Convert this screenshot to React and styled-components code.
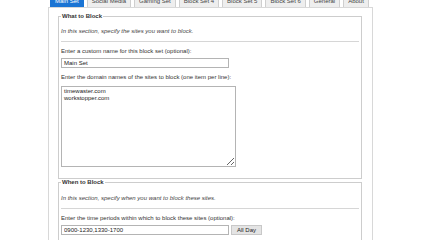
import styled, { createGlobalStyle } from "styled-components"

var tabs = ["Main Set", "Social Media", "Gaming Set", "Block Set 4", "Block Set 5", "Block Set 6", "General", "About"]

var App = () => (
  <Page>
    <Global />
    <TabBar>
      {tabs.map((t, i) => <Tab key={t} active={i === 0}>{t}</Tab>)}
    </TabBar>
    <Panel>
      <Fieldset>
        <Legend>What to Block</Legend>
        <Intro>In this section, specify the sites you want to block.</Intro>
        <Rule />
        <Label>Enter a custom name for this block set (optional):</Label>
        <TextInput defaultValue="Main Set" />
        <Label>Enter the domain names of the sites to block (one item per line):</Label>
        <Sites defaultValue={"timewaster.com\nworkstopper.com"} />
      </Fieldset>
      <Fieldset>
        <Legend>When to Block</Legend>
        <Intro wide>In this section, specify when you want to block these sites.</Intro>
        <Rule />
        <Label>Enter the time periods within which to block these sites (optional):</Label>
        <Row>
          <TextInput defaultValue="0900-1230,1330-1700" />
          <Button>All Day</Button>
        </Row>
      </Fieldset>
    </Panel>
  </Page>
)

var Global = createGlobalStyle`
html, body { margin: 0; padding: 0; background: #fff; overflow: hidden; }
body { font-family: "Liberation Sans", Arial, sans-serif; color: #333; }
`

var Page = styled.div`
display: flow-root;
width: 427px;
height: 240px;
`

var TabBar = styled.div`
display: flex;
gap: 3px;
margin: -5px 0 0 50px;
`

var Tab = styled.div`
box-sizing: border-box;
height: 12px;
padding: 2px 4px 0;
font-size: 6px;
line-height: 7px;
white-space: nowrap;
border: 1px solid ${p => p.active ? "#1a74d4" : "#cfcfcf"};
border-bottom: none;
background: ${p => p.active ? "#1a74d4" : "#eeeeee"};
color: ${p => p.active ? "#fff" : "#444"};
`

var Panel = styled.div`
margin-left: 48px;
width: 325px;
box-sizing: border-box;
border: 1px solid #d8d8d8;
padding: 5px 10px 10px 9px;
`

var Fieldset = styled.fieldset`
margin: 0;
border: 1px solid #cdcdcd;
padding: 0 2px 11px 2px;
`

var Legend = styled.legend`
padding: 0 1px;
font-size: 6px;
line-height: 7px;
font-weight: bold;
color: #333;
`

var Intro = styled.div`
margin-top: ${p => p.wide ? "9px" : "8px"};
font-size: 6px;
line-height: 7px;
font-style: italic;
color: #444;
`

var Rule = styled.div`
margin-top: 6px;
border-top: 1px solid #d6d6d6;
`

var Label = styled.div`
margin-top: 6px;
font-size: 6px;
line-height: 7px;
color: #333;
`

var TextInput = styled.input`
display: block;
box-sizing: border-box;
width: 168px;
height: 10px;
margin: 3px 0 0;
padding: 0 2px;
border: 1px solid #b4b4b4;
border-radius: 0;
font-family: "Liberation Sans", Arial, sans-serif;
font-size: 6px;
color: #222;
outline: none;
`

var Sites = styled.textarea`
display: block;
box-sizing: border-box;
width: 175px;
height: 81px;
margin: 5px 0 0;
padding: 1px 2px;
border: 1px solid #b4b4b4;
border-radius: 0;
font-family: "Liberation Sans", Arial, sans-serif;
font-size: 6px;
line-height: 7px;
color: #222;
outline: none;
`

var Row = styled.div`
display: flex;
align-items: flex-end;
gap: 2px;
`

var Button = styled.button`
box-sizing: border-box;
height: 10px;
padding: 0 5px;
border: 1px solid #c8c8c8;
border-radius: 0;
background: #e4e4e4;
font-family: "Liberation Sans", Arial, sans-serif;
font-size: 6px;
line-height: 7px;
color: #222;
`

export default App
